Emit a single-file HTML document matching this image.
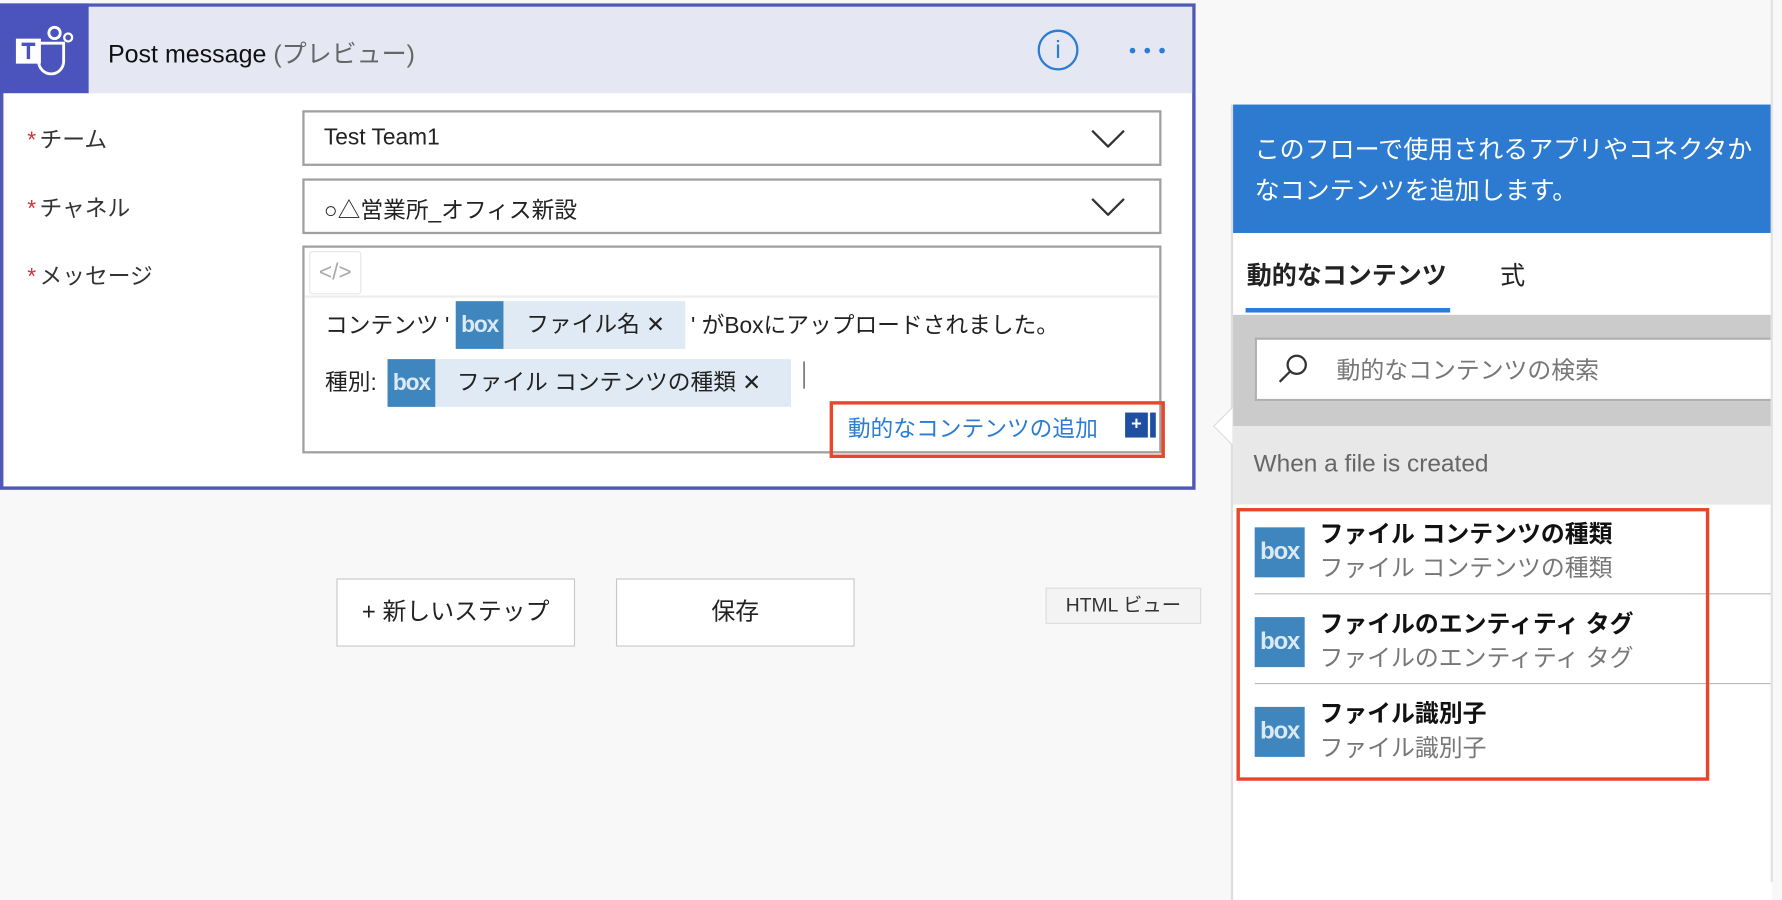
<!DOCTYPE html>
<html><head><meta charset="utf-8"><style>
*{box-sizing:border-box;margin:0;padding:0}
html,body{width:1782px;height:882px;overflow:hidden;background:#f8f8f8}
body{font-family:"Liberation Sans","Noto Sans CJK JP",sans-serif;color:#222}
#s{position:absolute;left:0;top:0;width:1568px;height:776px;transform:scale(1.13648);transform-origin:0 0}
.a{position:absolute}
.lbl{position:absolute;left:24px;font-size:20px;color:#333}
.lbl b{color:#d13438;font-weight:normal;margin-right:3px}
.inp{position:absolute;left:266px;width:756px;border:2px solid #a0a0a0;background:#fff}
.chev{position:absolute;right:30px;top:15px;width:30px;height:16px}
.tok{position:absolute;height:42px;background:#dfeaf4;font-size:20px;line-height:42px;white-space:nowrap}
.bx{display:inline-block;background:#3f86bf;color:#dbe9f5;font-weight:bold;font-size:20px;text-align:center;letter-spacing:-1px;vertical-align:top}
.tok .bx{width:42px;height:42px;line-height:42px}
.it{position:absolute;left:1104px}
.it .bx{position:absolute;left:0;top:0;width:44px;height:44px;line-height:44px;font-size:21px}
.it .t{position:absolute;left:57px;top:-10px;font-size:21px;font-weight:bold;color:#111;white-space:nowrap}
.it .u{position:absolute;left:57px;top:20px;font-size:21px;color:#777;white-space:nowrap}
.btn{position:absolute;top:509px;height:60px;width:210px;background:#fff;border:1px solid #c8c8c8;font-size:21px;text-align:center;line-height:58px;color:#222}
</style></head><body><div id="s">
<div class="a" style="left:0;top:3px;width:1052px;height:428px;border:3px solid #4f58b8;background:#fff"></div>
<div class="a" style="left:3px;top:6px;width:1046px;height:76px;background:#e5e7f3"></div>
<div class="a" style="left:0;top:3px;width:78px;height:79px;background:#4b53bc"></div>
<svg class="a" style="left:12px;top:22px" width="54" height="46" viewBox="0 0 54 46">
<circle cx="36" cy="7" r="5" fill="none" stroke="#fff" stroke-width="2.5"/><circle cx="48" cy="11" r="3.5" fill="none" stroke="#fff" stroke-width="2"/>
<path d="M22 16h22v16a11 11 0 0 1-22 0z" fill="none" stroke="#fff" stroke-width="2.5"/>
<rect x="2" y="12" width="22" height="22" fill="#fff"/><path d="M7 17h12M13 17v13" stroke="#4b53bc" stroke-width="3"/></svg>
<div class="a" style="left:95px;top:30px;font-size:22px;color:#111">Post message <span style="color:#666">(プレビュー)</span></div>
<div class="a" style="left:913px;top:26px;width:36px;height:36px;border:2px solid #2b7cd3;border-radius:50%;color:#2b7cd3;text-align:center;font-size:22px;line-height:32px">i</div>
<div class="a" style="left:994px;top:42px;width:5px;height:5px;border-radius:50%;background:#2b7cd3"></div>
<div class="a" style="left:1007px;top:42px;width:5px;height:5px;border-radius:50%;background:#2b7cd3"></div>
<div class="a" style="left:1020px;top:42px;width:5px;height:5px;border-radius:50%;background:#2b7cd3"></div>

<div class="lbl" style="top:107px"><b>*</b>チーム</div>
<div class="lbl" style="top:167px"><b>*</b>チャネル</div>
<div class="lbl" style="top:227px"><b>*</b>メッセージ</div>
<div class="inp" style="top:97px;height:49px"><div class="a" style="left:17px;top:11px;font-size:20px">Test Team1</div><svg class="chev" viewBox="0 0 30 16"><path d="M1 1l14 14L29 1" fill="none" stroke="#333" stroke-width="2"/></svg></div>
<div class="inp" style="top:157px;height:49px"><div class="a" style="left:17px;top:10px;font-size:20px">○△営業所_オフィス新設</div><svg class="chev" viewBox="0 0 30 16"><path d="M1 1l14 14L29 1" fill="none" stroke="#333" stroke-width="2"/></svg></div>
<div class="inp" style="top:216px;height:183px">
 <div class="a" style="left:0;top:0;width:752px;height:44px;border-bottom:2px solid #eee"></div>
 <div class="a" style="left:4px;top:3px;width:46px;height:38px;border:1px solid #e6e6e6;border-radius:3px;color:#aaa;font-size:20px;text-align:center;line-height:36px">&lt;/&gt;</div>
</div>
<div class="a" style="left:286px;top:270px;font-size:20px">コンテンツ '</div>
<div class="tok" style="left:401px;top:265px;width:202px"><span class="bx">box</span><span style="margin-left:20px">ファイル名 ✕</span></div>
<div class="a" style="left:608px;top:270px;font-size:20px">' がBoxにアップロードされました。</div>
<div class="a" style="left:286px;top:320px;font-size:20px">種別:</div>
<div class="tok" style="left:341px;top:316px;width:355px"><span class="bx">box</span><span style="margin-left:19px">ファイル コンテンツの種類 ✕</span></div>
<div class="a" style="left:707px;top:318px;width:1px;height:24px;background:#333"></div>
<div class="a" style="left:730px;top:353px;width:295px;height:50px;border:3px solid #e8472b"></div>
<div class="a" style="left:746px;top:361px;font-size:20px;color:#2b7cd3">動的なコンテンツの追加</div>
<div class="a" style="left:990px;top:363px;width:20px;height:22px;background:#1f4fa0;color:#fff;font-size:16px;font-weight:bold;text-align:center;line-height:22px">+</div>
<div class="a" style="left:1012px;top:363px;width:5px;height:22px;background:#1f4fa0"></div>

<div class="btn" style="left:296px">+ 新しいステップ</div>
<div class="btn" style="left:542px">保存</div>
<div class="a" style="left:920px;top:517px;width:137px;height:32px;background:#f3f3f3;border:1px solid #dcdcdc;font-size:17px;line-height:30px;text-align:center;color:#333">HTML ビュー</div>

<div class="a" style="left:1083px;top:92px;width:476px;height:700px;background:#fff;border-left:2px solid #ddd"></div>
<div class="a" style="left:1558px;top:0;width:2px;height:776px;background:#e2e2e2"></div>
<div class="a" style="left:1085px;top:92px;width:473px;height:113px;background:#2d7bd0"></div>
<div class="a" style="left:1104px;top:114px;font-size:22px;color:#fff;line-height:36px;white-space:nowrap;width:454px;overflow:hidden">このフローで使用されるアプリやコネクタか<br>なコンテンツを追加します。</div>
<div class="a" style="left:1097px;top:225px;font-size:22px;font-weight:bold;color:#222">動的なコンテンツ</div>
<div class="a" style="left:1320px;top:225px;font-size:22px;color:#222">式</div>
<div class="a" style="left:1096px;top:271px;width:180px;height:4px;background:#2b7ae0"></div>
<div class="a" style="left:1085px;top:277px;width:473px;height:98px;background:#cbcbcb"></div>
<div class="a" style="left:1104px;top:297px;width:454px;height:56px;background:#fff;border:2px solid #b0b0b0;border-right:none"></div>
<svg class="a" style="left:1124px;top:310px" width="28" height="28" viewBox="0 0 28 28"><circle cx="17" cy="11" r="8" fill="none" stroke="#333" stroke-width="2"/><path d="M11 17L2 26" stroke="#333" stroke-width="2"/></svg>
<div class="a" style="left:1176px;top:310px;font-size:21px;color:#777">動的なコンテンツの検索</div>
<svg class="a" style="left:1067px;top:358px" width="18" height="34" viewBox="0 0 18 34"><path d="M18 0L1 17L18 34z" fill="#fff" stroke="#ddd"/></svg>
<div class="a" style="left:1085px;top:375px;width:473px;height:69px;background:#e8e8e8"></div>
<div class="a" style="left:1103px;top:396px;font-size:21.5px;color:#666">When a file is created</div>
<div class="it" style="top:464px"><span class="bx">box</span><span class="t">ファイル コンテンツの種類</span><span class="u">ファイル コンテンツの種類</span></div>
<div class="a" style="left:1104px;top:522px;width:454px;height:1px;background:#bbb"></div>
<div class="it" style="top:543px"><span class="bx">box</span><span class="t">ファイルのエンティティ タグ</span><span class="u">ファイルのエンティティ タグ</span></div>
<div class="a" style="left:1104px;top:601px;width:454px;height:1px;background:#bbb"></div>
<div class="it" style="top:622px"><span class="bx">box</span><span class="t">ファイル識別子</span><span class="u">ファイル識別子</span></div>
<div class="a" style="left:1088px;top:447px;width:416px;height:240px;border:3px solid #e8472b"></div>
</div></body></html>
